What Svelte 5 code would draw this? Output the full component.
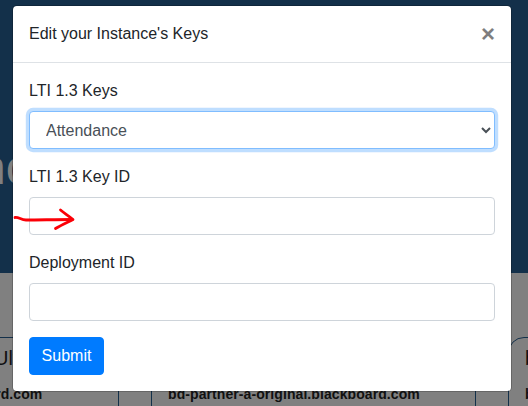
<script>
    let selected = "Attendance";
    let keyId = "";
    let deploymentId = "";
</script>

<div class="page">
    <header class="hero">
        <h1>Instance</h1>
    </header>
    <section class="cards">
        <div class="card first">
            <span class="name">Ultra</span>
            <strong>bd-partner-a-ultra.blackboard.com</strong>
        </div>
        <div class="card">
            <span class="name">Original</span>
            <strong>bd-partner-a-original.blackboard.com</strong>
        </div>
        <div class="card">
            <span class="name">b</span>
            <strong>b</strong>
        </div>
    </section>
</div>

<div class="modal">
    <div class="modal-header">
        <h5>Edit your Instance's Keys</h5>
        <button class="close" type="button">×</button>
    </div>
    <form class="modal-body" on:submit|preventDefault>
        <div class="form-group">
            <label for="keys">LTI 1.3 Keys</label>
            <select id="keys" class="form-control focused" bind:value={selected}>
                <option>Attendance</option>
            </select>
        </div>
        <div class="form-group">
            <label for="key-id">LTI 1.3 Key ID</label>
            <input id="key-id" class="form-control" type="text" bind:value={keyId} />
        </div>
        <div class="form-group">
            <label for="deployment">Deployment ID</label>
            <input id="deployment" class="form-control" type="text" bind:value={deploymentId} />
        </div>
        <button class="submit" type="submit">Submit</button>
    </form>
</div>

<!-- hand-drawn annotation on top of the screenshot -->
<svg class="arrow" width="80" height="30" viewBox="0 0 80 30" fill="none">
    <path d="M15 13.500 C19 13 21 16 26 16 C40 16 55 15.500 72 15.500" stroke="#fb0007" stroke-width="2.800" stroke-linecap="round" />
    <path d="M60.500 6 C64 9 69 12 73 15.500 C68 18 61 21 55.500 24.500" stroke="#fb0007" stroke-width="2.800" stroke-linecap="round" stroke-linejoin="round" />
</svg>

<style>
    :global(body) {
        font-family: "Liberation Sans", Arial, sans-serif;
        background: #808080;
        overflow: hidden;
    }

    .page {
        width: 528px;
        height: 406px;
        overflow: hidden;
    }

    .hero {
        height: 273px;
        background: #13304a;
        box-sizing: border-box;
        padding-top: 138px;
    }

    .hero h1 {
        margin: 0 0 0 -125px;
        font-size: 48px;
        line-height: 60px;
        font-weight: 400;
        color: #808080;
        white-space: nowrap;
    }

    .cards {
        display: flex;
        gap: 32px;
        margin: 64px 0 0 -206px;
        color: #111;
    }

    .card {
        flex: none;
        width: 325px;
        height: 100px;
        box-sizing: border-box;
        padding: 8px 16px 0;
        border: 1px solid #13304a;
        border-radius: 16px;
        display: flex;
        flex-direction: column;
    }

    .name {
        font-size: 20px;
        line-height: 24px;
    }

    .first .name {
        margin-left: 183px;
    }

    .first strong {
        text-align: right;
        padding-right: 61px;
    }

    .card strong {
        font-size: 14px;
        line-height: 20px;
        letter-spacing: 0.08px;
        margin-top: 14px;
        white-space: nowrap;
    }

    .modal {
        position: absolute;
        left: 12px;
        top: 5px;
        width: 500px;
        box-sizing: border-box;
        background: #fff;
        background-clip: padding-box;
        border: 1px solid rgba(0, 0, 0, 0.2);
        border-radius: 4.800px;
        color: #212529;
        font-size: 16px;
        line-height: 24px;
    }

    .modal-header {
        display: flex;
        justify-content: space-between;
        align-items: flex-start;
        padding: 16px;
        border-bottom: 1px solid #dee2e6;
    }

    h5 {
        margin: 0;
        font-size: 16px;
        font-weight: 400;
        line-height: 24px;
    }

    .close {
        background: none;
        border: 0;
        padding: 0;
        font-family: inherit;
        font-size: 24px;
        font-weight: 700;
        line-height: 24px;
        color: #000;
        opacity: 0.5;
    }

    .modal-body {
        padding: 16px;
    }

    .form-group {
        margin-bottom: 16px;
    }

    label {
        display: block;
        margin-bottom: 8px;
    }

    .form-control {
        display: block;
        width: 100%;
        height: 38px;
        box-sizing: border-box;
        padding: 6px 12px;
        font-family: inherit;
        font-size: 16px;
        line-height: 24px;
        color: #495057;
        background: #fff;
        border: 1px solid #ced4da;
        border-radius: 4px;
        outline: 0;
    }

    .focused {
        border-color: #80bdff;
        box-shadow: 0 0 0 3.200px rgba(0, 123, 255, 0.25);
    }

    .submit {
        display: block;
        width: 75px;
        height: 38px;
        padding: 6px 0;
        font-family: inherit;
        font-size: 16px;
        line-height: 24px;
        color: #fff;
        background: #007bff;
        border: 1px solid #007bff;
        border-radius: 4px;
    }

    .arrow {
        position: absolute;
        left: 0;
        top: 204px;
    }
</style>
